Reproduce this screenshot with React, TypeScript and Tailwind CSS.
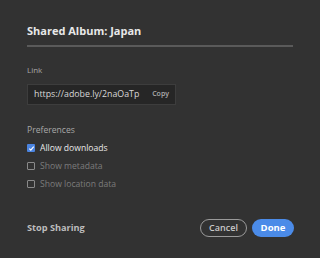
import React from "react";

export default function App() {
  return (
    <div className="w-[320px] h-[258px] bg-[#323232] px-[27px] pt-[22px] text-[#e0e0e0]" style={{ fontFamily: '"Open Sans", "Noto Sans", sans-serif' }}>
      <div className="text-[11px] font-bold leading-[18px] text-[#e8e8e8]">Shared Album: Japan</div>
      <div className="mt-[5px] h-[2px] w-[266px] bg-[#5a5a5a]" />
      <div className="mt-[17px] text-[8px] leading-[12px] text-[#a8a8a8]">Link</div>
      <div className="mt-[8px] flex h-[21px] w-[149px] items-center justify-between border border-[#3d3d3d] bg-[#262626] pl-[6px] pr-[6px]">
        <span className="text-[8.8px] text-[#d8d8d8]">https://adobe.ly/2naOaTp</span>
        <span className="text-[7px] font-semibold text-[#b0b0b0]">Copy</span>
      </div>
      <div className="mt-[19px] text-[8.6px] leading-[12px] text-[#a8a8a8]">Preferences</div>
      <div className="mt-[6px] flex flex-col gap-[6px]">
        <div className="flex h-[12px] items-center gap-[5px]">
          <div className="flex h-[8px] w-[8px] items-center justify-center rounded-[1px] bg-[#4b84e0]">
            <svg width="7" height="7" viewBox="0 0 8 8"><path d="M1.5 4.2 L3.2 5.8 L6.5 1.8" stroke="#fff" strokeWidth="1.3" fill="none" /></svg>
          </div>
          <span className="text-[8.6px] text-[#e8e8e8]">Allow downloads</span>
        </div>
        <div className="flex h-[12px] items-center gap-[5px]">
          <div className="h-[8px] w-[8px] rounded-[1px] border border-[#8a8a8a]" />
          <span className="text-[8.6px] text-[#7c7c7c]">Show metadata</span>
        </div>
        <div className="flex h-[12px] items-center gap-[5px]">
          <div className="h-[8px] w-[8px] rounded-[1px] border border-[#8a8a8a]" />
          <span className="text-[8.6px] text-[#7c7c7c]">Show location data</span>
        </div>
      </div>
      <div className="mt-[29px] flex w-[267px] items-center justify-between">
        <span className="text-[9.2px] font-bold text-[#bdbdbd]">Stop Sharing</span>
        <div className="flex items-center gap-[5px]">
          <div className="flex h-[18px] w-[47px] items-center justify-center rounded-full border-[1.5px] border-[#9a9a9a] text-[9px] font-semibold text-[#c8c8c8]">Cancel</div>
          <div className="flex h-[18px] w-[42px] items-center justify-center rounded-full bg-[#4b8be8] text-[9.5px] font-bold text-white">Done</div>
        </div>
      </div>
    </div>
  );
}
